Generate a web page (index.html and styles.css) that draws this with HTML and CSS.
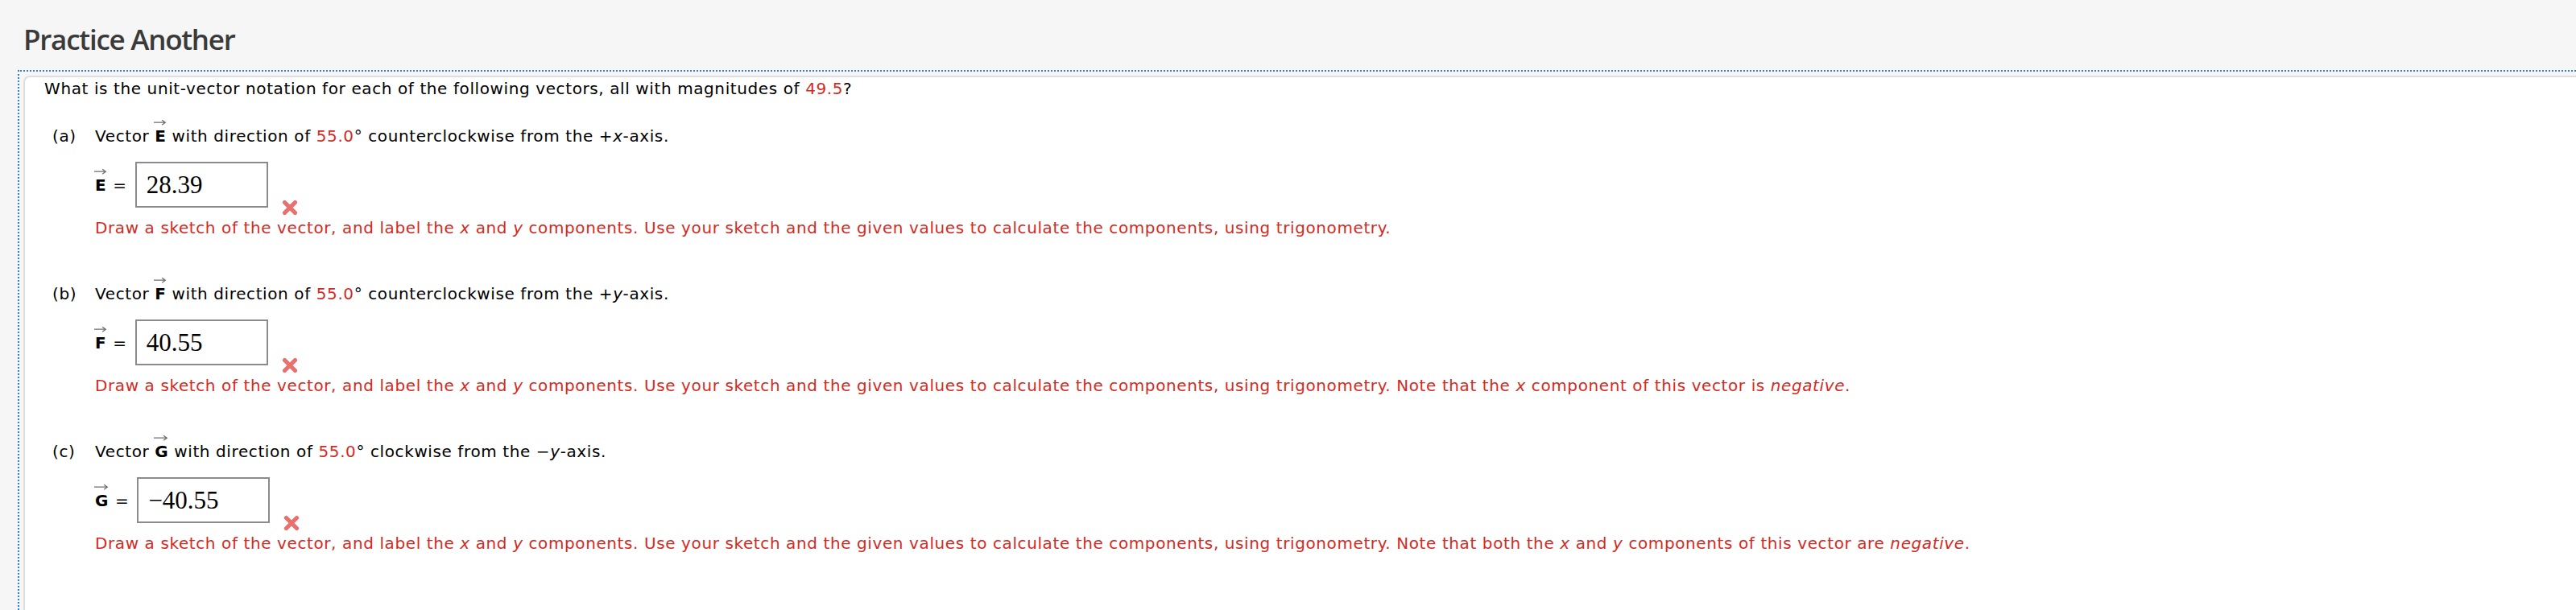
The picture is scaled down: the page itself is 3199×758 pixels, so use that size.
FILE: index.html
```html
<!DOCTYPE html>
<html>
<head>
<meta charset="utf-8">
<title>Practice Another</title>
<link rel="stylesheet" href="styles.css">
</head>
<body>
<header class="page-head">
  <h1 class="title">Practice Another</h1>
</header>
<div class="focus">
  <div class="card">
    <p class="question">What is the unit-vector notation for each of the following vectors, all with magnitudes of <span class="val">49.5</span>?</p>

    <div class="part">
      <div class="prompt"><span class="label">(a)</span><span class="ptext">Vector <span class="vec">E<svg class="arrow" width="17" height="8" viewBox="0 0 17 8"><path d="M1 4.2 H15 M11.2 1.2 L15.3 4.2 L11.2 7.2" fill="none" stroke="#6f6f6f" stroke-width="1.3"/></svg></span> with direction of <span class="val">55.0</span>° counterclockwise from the +<i>x</i>-axis.</span></div>
      <div class="answer-row"><span class="vec">E<svg class="arrow" width="17" height="8" viewBox="0 0 17 8"><path d="M1 4.2 H15 M11.2 1.2 L15.3 4.2 L11.2 7.2" fill="none" stroke="#6f6f6f" stroke-width="1.3"/></svg></span><span class="eq">=</span><span class="box">28.39</span><svg class="xmark" width="22" height="20" viewBox="0 0 22 20"><path d="M4.5 3.5 L17.5 16.5 M17.5 3.5 L4.5 16.5" stroke="#e8716d" stroke-width="5.2" stroke-linecap="round"/></svg></div>
      <p class="hint">Draw a sketch of the vector, and label the <i>x</i> and <i>y</i> components. Use your sketch and the given values to calculate the components, using trigonometry.</p>
    </div>

    <div class="part">
      <div class="prompt"><span class="label">(b)</span><span class="ptext">Vector <span class="vec">F<svg class="arrow" width="17" height="8" viewBox="0 0 17 8"><path d="M1 4.2 H15 M11.2 1.2 L15.3 4.2 L11.2 7.2" fill="none" stroke="#6f6f6f" stroke-width="1.3"/></svg></span> with direction of <span class="val">55.0</span>° counterclockwise from the +<i>y</i>-axis.</span></div>
      <div class="answer-row"><span class="vec">F<svg class="arrow" width="17" height="8" viewBox="0 0 17 8"><path d="M1 4.2 H15 M11.2 1.2 L15.3 4.2 L11.2 7.2" fill="none" stroke="#6f6f6f" stroke-width="1.3"/></svg></span><span class="eq">=</span><span class="box">40.55</span><svg class="xmark" width="22" height="20" viewBox="0 0 22 20"><path d="M4.5 3.5 L17.5 16.5 M17.5 3.5 L4.5 16.5" stroke="#e8716d" stroke-width="5.2" stroke-linecap="round"/></svg></div>
      <p class="hint">Draw a sketch of the vector, and label the <i>x</i> and <i>y</i> components. Use your sketch and the given values to calculate the components, using trigonometry. Note that the <i>x</i> component of this vector is <i>negative</i>.</p>
    </div>

    <div class="part">
      <div class="prompt"><span class="label">(c)</span><span class="ptext">Vector <span class="vec">G<svg class="arrow" width="19" height="8" viewBox="0 0 19 8"><path d="M1 4.2 H17 M13.2 1.2 L17.3 4.2 L13.2 7.2" fill="none" stroke="#6f6f6f" stroke-width="1.3"/></svg></span> with direction of <span class="val">55.0</span>° clockwise from the −<i>y</i>-axis.</span></div>
      <div class="answer-row"><span class="vec">G<svg class="arrow" width="19" height="8" viewBox="0 0 19 8"><path d="M1 4.2 H17 M13.2 1.2 L17.3 4.2 L13.2 7.2" fill="none" stroke="#6f6f6f" stroke-width="1.3"/></svg></span><span class="eq">=</span><span class="box">−40.55</span><svg class="xmark" width="22" height="20" viewBox="0 0 22 20"><path d="M4.5 3.5 L17.5 16.5 M17.5 3.5 L4.5 16.5" stroke="#e8716d" stroke-width="5.2" stroke-linecap="round"/></svg></div>
      <p class="hint">Draw a sketch of the vector, and label the <i>x</i> and <i>y</i> components. Use your sketch and the given values to calculate the components, using trigonometry. Note that both the <i>x</i> and <i>y</i> components of this vector are <i>negative</i>.</p>
    </div>
  </div>
</div>
</body>
</html>
```

FILE: styles.css
```css
html, body {
  margin: 0;
  padding: 0;
}
body {
  background: #f6f6f6;
  font-family: "DejaVu Sans", Verdana, sans-serif;
  font-size: 20px;
  line-height: 24px;
  letter-spacing: 0.6px;
  color: #000;
  overflow: hidden;
  height: 758px;
  display: flex;
  flex-direction: column;
}
.page-head {
  padding: 25px 0 0 29px;
}
.title {
  margin: 0;
  font-family: "Open Sans", sans-serif;
  font-weight: 600;
  font-size: 35px;
  line-height: 48px;
  letter-spacing: -1.25px;
  color: #3a3a3a;
}
.focus {
  flex: 1;
  min-height: 0;
  margin: 14px 0 0 22px;
  border-top: 2px dotted #2f7fe6;
  border-left: 2px dotted #2f7fe6;
  padding: 5px 0 0 5px;
}
.card {
  box-sizing: border-box;
  background: #fff;
  border-top: 2px solid #dedede;
  border-left: 2px solid #dedede;
  border-top-left-radius: 8px;
  height: 100%;
  padding: 2px 0 0 24px;
}
.question {
  margin: 0;
}
.val {
  color: #d22b24;
}
.part {
  margin-top: 35px;
  padding-left: 10px;
}
.part + .part {
  margin-top: 58px;
}
.prompt {
  display: flex;
}
.label {
  width: 53px;
  flex: none;
}
.vec {
  position: relative;
  display: inline-block;
  font-weight: bold;
}
.vec .arrow {
  position: absolute;
  left: -2px;
  top: -9px;
}
.answer-row {
  display: flex;
  align-items: center;
  margin: 20px 0 0 53px;
}
.eq {
  margin: 0 10px 0 8px;
}
.box {
  box-sizing: border-box;
  width: 165px;
  height: 57px;
  border: 2px solid #8b8b8b;
  padding-left: 12px;
  display: flex;
  align-items: center;
  font-family: "Liberation Serif", "Times New Roman", serif;
  font-size: 31px;
  letter-spacing: 0;
}
.xmark {
  align-self: flex-end;
  margin: 0 0 -10px 16px;
}
.hint {
  margin: 13px 0 0 53px;
  color: #d22b24;
}
```
